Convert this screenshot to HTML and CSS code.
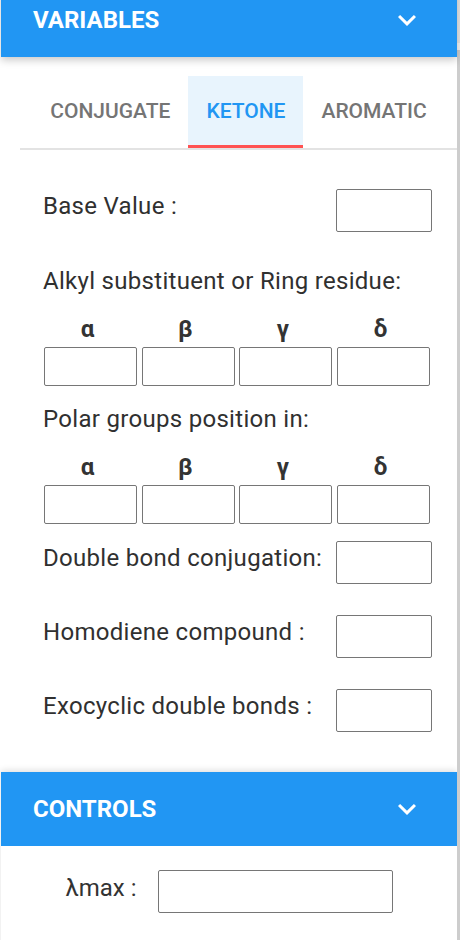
FILE: index.html
```html
<!DOCTYPE html>
<html lang="en">
<head>
    <meta charset="UTF-8">
    <meta name="viewport" content="width=device-width, initial-scale=1.0">
    <title>Woodward-Fieser Calculator</title>
    <link rel="stylesheet" href="styles.css">
</head>
<body>
    <div class="page">
        <div class="panels">
            <section class="expander variables">
                <header class="expander-head">
                    <span>VARIABLES</span>
                    <svg class="chevron" viewBox="0 0 24 24"><path d="M16.59 8.59L12 13.17 7.41 8.59 6 10l6 6 6-6z"/></svg>
                </header>
                <div class="expander-body">
                    <nav class="tabs">
                        <button class="tab">CONJUGATE</button>
                        <button class="tab active">KETONE</button>
                        <button class="tab">AROMATIC</button>
                    </nav>

                    <div class="form">
                        <div class="field-row first">
                            <label>Base Value :</label>
                            <input type="text" class="box">
                        </div>

                        <p class="label alkyl">Alkyl substituent or Ring residue:</p>
                        <div class="greek">
                            <span>α</span><span>β</span><span>γ</span><span>δ</span>
                            <input type="text"><input type="text"><input type="text"><input type="text">
                        </div>

                        <p class="label polar">Polar groups position in:</p>
                        <div class="greek">
                            <span>α</span><span>β</span><span>γ</span><span>δ</span>
                            <input type="text"><input type="text"><input type="text"><input type="text">
                        </div>

                        <div class="field-row double">
                            <label>Double bond conjugation:</label>
                            <input type="text" class="box">
                        </div>
                        <div class="field-row">
                            <label>Homodiene compound :</label>
                            <input type="text" class="box">
                        </div>
                        <div class="field-row">
                            <label>Exocyclic double bonds :</label>
                            <input type="text" class="box">
                        </div>
                    </div>
                </div>
            </section>

            <section class="expander controls">
                <header class="expander-head">
                    <span>CONTROLS</span>
                    <svg class="chevron" viewBox="0 0 24 24"><path d="M16.59 8.59L12 13.17 7.41 8.59 6 10l6 6 6-6z"/></svg>
                </header>
                <div class="controls-body">
                    <label>λmax :</label>
                    <input type="text" class="wide">
                </div>
            </section>
        </div>
        <div class="scroll-track"></div>
    </div>
</body>
</html>
```

FILE: styles.css
```css
body {
    margin: 0;
    padding: 0;
    background-color: #fff;
    font-family: Roboto, "Liberation Sans", sans-serif;
    color: #333;
    overflow: hidden;
}

.page {
    display: flex;
    padding-left: 1px;
    min-height: 940px;
}

.panels {
    width: 456px;
}

.scroll-track {
    width: 3px;
    background: linear-gradient(#e4e4e4 0, #e4e4e4 43px, #f2f2f2 43px, #f2f2f2 50px, #cdcdcd 50px);
}

.expander {
    background-color: #fff;
}

.variables {
    margin-top: -17px;
    margin-bottom: 2px;
}

.controls {
    box-shadow: 0 -2px 6px rgba(0, 0, 0, 0.12);
}

.expander-head {
    height: 74px;
    background-color: #2196f3;
    color: #fff;
    font-size: 24px;
    font-weight: 700;
    display: flex;
    align-items: center;
    justify-content: space-between;
    padding: 0 32px;
    box-sizing: border-box;
    position: relative;
    z-index: 1;
}

.variables .expander-head {
    box-shadow: 0 3px 8px rgba(0, 0, 0, 0.22);
}

.chevron {
    width: 36px;
    height: 36px;
    fill: #fff;
}

.expander-body {
    padding-top: 19px;
}

.tabs {
    display: flex;
    justify-content: center;
    margin-left: 19px;
    border-bottom: 2px solid #e3e3e3;
}

.tab {
    font-family: Roboto, "Liberation Sans", sans-serif;
    font-size: 21px;
    font-weight: 500;
    color: #757575;
    background: none;
    border: none;
    border-bottom: 3px solid transparent;
    height: 72px;
    padding: 0 18px;
    margin: 0;
}

.tab.active {
    color: #2196f3;
    background-color: #e8f4fd;
    border-bottom-color: #ff5252;
}

.form {
    padding: 39px 25px 38px 42px;
    display: flex;
    flex-direction: column;
}

.field-row {
    display: flex;
    justify-content: space-between;
    align-items: center;
    margin-top: 31px;
}

.field-row.first {
    margin-top: 0;
}

.field-row.double {
    margin-top: 17px;
}

.field-row label,
.label {
    font-size: 24px;
    letter-spacing: 0.3px;
    color: #303030;
}

.field-row label {
    margin-bottom: 9px;
}

input {
    border: 1px solid #767676;
    border-radius: 2px;
    box-sizing: border-box;
    padding: 0 4px;
    margin: 0;
    font-size: 18px;
    background: #fff;
}

.box {
    width: 96px;
    height: 43px;
}

.label {
    margin: 0;
}

.alkyl {
    margin-top: 35px;
}

.polar {
    margin-top: 19px;
}

.greek {
    display: grid;
    grid-template-columns: repeat(4, 1fr);
    column-gap: 4.5px;
    row-gap: 4px;
    width: 386px;
    margin-top: 20px;
    margin-left: 1px;
}

.greek span {
    text-align: center;
    font-size: 24px;
    font-weight: 700;
    padding-right: 6px;
}

.greek input {
    width: 100%;
    height: 39px;
}

.controls-body {
    display: flex;
    justify-content: center;
    align-items: center;
    gap: 21px;
    padding: 24px 0 60px 0;
}

.controls-body label {
    font-size: 24px;
    margin-bottom: 8px;
}

.wide {
    width: 235px;
    height: 43px;
}
```
